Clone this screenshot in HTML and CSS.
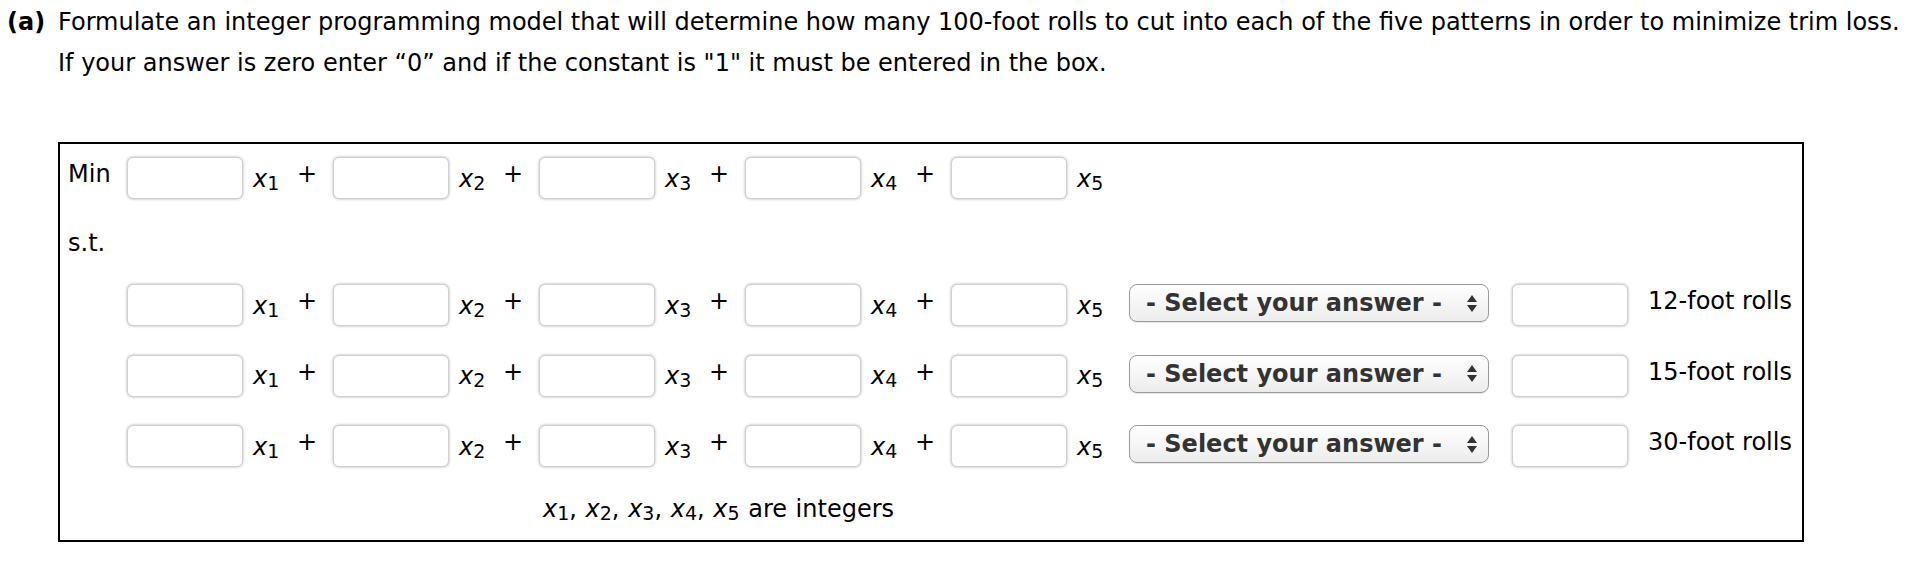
FILE: index.html
```html
<!DOCTYPE html>
<html>
<head>
<meta charset="utf-8">
<link rel="stylesheet" href="styles.css">
</head>
<body>
<div class="question">
  <span class="qlabel">(a)</span>
  <div class="qtext">
    <div class="qline">Formulate an integer programming model that will determine how many 100-foot rolls to cut into each of the five patterns in order to minimize trim loss.</div>
    <div class="qline">If your answer is zero enter “0” and if the constant is "1" it must be entered in the box.</div>
  </div>
</div>

<div class="model">
  <div class="row row-min">
    <div class="lbl">Min</div>
    <input class="coef" type="text"><span class="var"><i>x</i><sub>1</sub></span><span class="plus">+</span>
    <input class="coef" type="text"><span class="var"><i>x</i><sub>2</sub></span><span class="plus">+</span>
    <input class="coef" type="text"><span class="var"><i>x</i><sub>3</sub></span><span class="plus">+</span>
    <input class="coef" type="text"><span class="var"><i>x</i><sub>4</sub></span><span class="plus">+</span>
    <input class="coef" type="text"><span class="var"><i>x</i><sub>5</sub></span>
  </div>
  <div class="row row-st">
    <div class="lbl">s.t.</div>
  </div>
  <div class="row row-c first">
    <div class="lbl"></div>
    <input class="coef" type="text"><span class="var"><i>x</i><sub>1</sub></span><span class="plus">+</span>
    <input class="coef" type="text"><span class="var"><i>x</i><sub>2</sub></span><span class="plus">+</span>
    <input class="coef" type="text"><span class="var"><i>x</i><sub>3</sub></span><span class="plus">+</span>
    <input class="coef" type="text"><span class="var"><i>x</i><sub>4</sub></span><span class="plus">+</span>
    <input class="coef" type="text"><span class="var"><i>x</i><sub>5</sub></span>
    <span class="sel-wrap"><select class="sel"><option>- Select your answer -</option></select><svg class="arrows" width="10" height="17" viewBox="0 0 10 17"><polygon points="0,7 5,0 10,7" fill="#333"/><polygon points="0,10 10,10 5,17" fill="#333"/></svg></span>
    <input class="coef rhs" type="text">
    <span class="rlbl">12-foot rolls</span>
  </div>
  <div class="row row-c">
    <div class="lbl"></div>
    <input class="coef" type="text"><span class="var"><i>x</i><sub>1</sub></span><span class="plus">+</span>
    <input class="coef" type="text"><span class="var"><i>x</i><sub>2</sub></span><span class="plus">+</span>
    <input class="coef" type="text"><span class="var"><i>x</i><sub>3</sub></span><span class="plus">+</span>
    <input class="coef" type="text"><span class="var"><i>x</i><sub>4</sub></span><span class="plus">+</span>
    <input class="coef" type="text"><span class="var"><i>x</i><sub>5</sub></span>
    <span class="sel-wrap"><select class="sel"><option>- Select your answer -</option></select><svg class="arrows" width="10" height="17" viewBox="0 0 10 17"><polygon points="0,7 5,0 10,7" fill="#333"/><polygon points="0,10 10,10 5,17" fill="#333"/></svg></span>
    <input class="coef rhs" type="text">
    <span class="rlbl">15-foot rolls</span>
  </div>
  <div class="row row-c">
    <div class="lbl"></div>
    <input class="coef" type="text"><span class="var"><i>x</i><sub>1</sub></span><span class="plus">+</span>
    <input class="coef" type="text"><span class="var"><i>x</i><sub>2</sub></span><span class="plus">+</span>
    <input class="coef" type="text"><span class="var"><i>x</i><sub>3</sub></span><span class="plus">+</span>
    <input class="coef" type="text"><span class="var"><i>x</i><sub>4</sub></span><span class="plus">+</span>
    <input class="coef" type="text"><span class="var"><i>x</i><sub>5</sub></span>
    <span class="sel-wrap"><select class="sel"><option>- Select your answer -</option></select><svg class="arrows" width="10" height="17" viewBox="0 0 10 17"><polygon points="0,7 5,0 10,7" fill="#333"/><polygon points="0,10 10,10 5,17" fill="#333"/></svg></span>
    <input class="coef rhs" type="text">
    <span class="rlbl">30-foot rolls</span>
  </div>
  <div class="integers"><i>x</i><sub>1</sub>, <i>x</i><sub>2</sub>, <i>x</i><sub>3</sub>, <i>x</i><sub>4</sub>, <i>x</i><sub>5</sub> are integers</div>
</div>
</body>
</html>
```

FILE: styles.css
```css
html, body {
  margin: 0;
  padding: 0;
  background: #fff;
}
body {
  font-family: "DejaVu Sans", Verdana, sans-serif;
  font-size: 24px;
  color: #000;
}
.question {
  display: flex;
  padding-left: 7px;
  padding-top: 2px;
  line-height: 41px;
}
.qlabel {
  font-weight: bold;
  width: 51px;
  flex: none;
}
.qline {
  white-space: nowrap;
}
.model {
  margin-top: 58px;
  margin-left: 58px;
  width: 1746px;
  box-sizing: border-box;
  border: 2px solid #000;
  padding: 13px 0 17px 0;
}
.row {
  display: flex;
  align-items: flex-start;
}
.lbl {
  width: 67px;
  flex: none;
  box-sizing: border-box;
  padding-left: 8px;
  padding-top: 3px;
}
.row-st {
  margin-top: 29.5px;
}
.row-st .lbl {
  padding-top: 0;
}
.row-c.first {
  margin-top: 27.5px;
}
.row-c {
  margin-top: 28.5px;
}
.coef {
  width: 116px;
  height: 42px;
  flex: none;
  box-sizing: border-box;
  margin: 0;
  border: 1px solid #cfcfcf;
  border-radius: 6px;
  box-shadow: 0 0 3px rgba(0, 0, 0, 0.3);
  background: #fff;
  font: inherit;
  padding: 0 6px;
}
.var {
  width: 46px;
  flex: none;
  box-sizing: border-box;
  padding-left: 10px;
  padding-top: 7.5px;
  white-space: nowrap;
}
.var i, .integers i {
  font-style: italic;
}
sub {
  font-size: 19px;
  vertical-align: -3px;
  line-height: 0;
}
.plus {
  width: 44px;
  flex: none;
  box-sizing: border-box;
  padding-left: 8px;
  padding-top: 3px;
}
.sel-wrap {
  position: relative;
  margin-left: 16px;
  flex: none;
  display: block;
  width: 360px;
  height: 38px;
}
.sel {
  -webkit-appearance: none;
  appearance: none;
  width: 360px;
  height: 38px;
  margin: 0;
  box-sizing: border-box;
  border: 1px solid #9a9a9a;
  border-radius: 8px;
  background: linear-gradient(#ffffff, #ececec);
  font-family: "DejaVu Sans", Verdana, sans-serif;
  font-size: 24px;
  font-weight: bold;
  color: #333;
  padding: 0 0 0 16px;
  box-shadow: 0 1px 1px rgba(0, 0, 0, 0.1);
}
.arrows {
  position: absolute;
  right: 12px;
  top: 10.5px;
}
.rhs {
  margin-left: 23px;
}
.rlbl {
  margin-left: 20px;
  padding-top: 3px;
  white-space: nowrap;
}
.integers {
  margin-top: 27.5px;
  padding-left: 483px;
  line-height: 28px;
  word-spacing: 1px;
}
```
